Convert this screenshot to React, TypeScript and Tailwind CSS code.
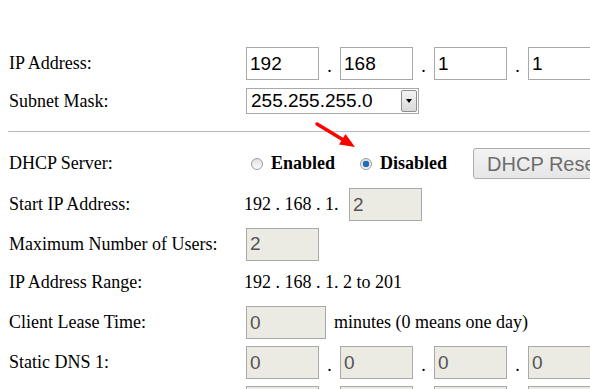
import React from 'react';

const serif = "font-['Liberation_Serif','Times_New_Roman',serif]";
const sans = "font-['Liberation_Sans',Arial,sans-serif]";

function Box({ value, gray = false, w = 'w-[73px]' }: { value: string; gray?: boolean; w?: string }) {
  return (
    <input
      readOnly
      value={value}
      className={`${w} h-[33px] shrink-0 border border-[#a9a9a9] px-[3px] text-[19px] outline-none ${sans} ${
        gray ? 'bg-[#ebebe4] text-[#545454]' : 'bg-white text-black'
      }`}
    />
  );
}

function Dot({ hidden }: { hidden?: boolean }) {
  return <span className="w-[21px] shrink-0 text-center text-[18px] pt-[6px]">{hidden ? '' : '.'}</span>;
}

function Quad({ values, gray = false, noDots = false }: { values: string[]; gray?: boolean; noDots?: boolean }) {
  return (
    <div className="flex items-center">
      {values.map((v, i) => (
        <React.Fragment key={i}>
          {i > 0 && <Dot hidden={noDots} />}
          <Box value={v} gray={gray} />
        </React.Fragment>
      ))}
    </div>
  );
}

function Row({ label, h, children }: { label?: string; h: string; children?: React.ReactNode }) {
  return (
    <div className={`flex items-center ${h}`}>
      <div className="w-[246px] shrink-0 pl-[9px] text-[18px] text-black">{label}</div>
      {children}
    </div>
  );
}

function Radio({ checked }: { checked?: boolean }) {
  return (
    <span className="w-[12px] h-[12px] rounded-full border border-[#9c9c9c] bg-gradient-to-b from-[#e2e2e2] to-[#fbfbfb] flex items-center justify-center shrink-0">
      {checked && <span className="w-[6px] h-[6px] rounded-full bg-[#1f6fb8] shadow-[0_0_1px_#0b3d6b]" />}
    </span>
  );
}

export default function App() {
  return (
    <div className={`relative w-[590px] h-[389px] overflow-hidden bg-white ${serif}`}>
      <div className="pt-[46px]">
        <Row label="IP Address:" h="h-[35px]">
          <Quad values={['192', '168', '1', '1']} />
        </Row>

        <Row label="Subnet Mask:" h="h-[40px]">
          <div className={`flex w-[173px] h-[26px] border border-[#a9a9a9] bg-white ${sans}`}>
            <span className="flex-1 pl-[4px] text-[19px] leading-[24px] text-black">255.255.255.0</span>
            <span className="w-[16px] m-[1px] border border-[#8f8f8f] rounded-[2px] bg-gradient-to-b from-[#f4f4f4] to-[#d9d9d9] flex items-center justify-center">
              <span className="w-0 h-0 border-l-[3px] border-r-[3px] border-t-[4px] border-l-transparent border-r-transparent border-t-black" />
            </span>
          </div>
        </Row>

        <div className="mt-[10px] ml-[8px] h-px bg-[#b8b8da]" />

        <div className="mt-[12px]">
          <Row label="DHCP Server:" h="h-[39px]">
            <div className="flex items-center ml-[5px] text-[18px] font-bold text-black">
              <Radio />
              <span className="ml-[8px]">Enabled</span>
              <span className="ml-[25px]"><Radio checked /></span>
              <span className="ml-[8px]">Disabled</span>
              <button
                className={`ml-[26px] h-[31px] shrink-0 whitespace-nowrap rounded-[3px] border border-[#acacac] bg-gradient-to-b from-[#f3f3f3] to-[#e6e6e6] pl-[13px] pr-[13px] text-[20px] font-normal text-[#6d6d6d] ${sans}`}
              >
                DHCP Reset
              </button>
            </div>
          </Row>
        </div>

        <Row label="Start IP Address:" h="h-[43px]">
          <span className="ml-[-2px] w-[105px] shrink-0 text-[18px]">192 . 168 . 1.</span>
          <Box value="2" gray />
        </Row>

        <Row label="Maximum Number of Users:" h="h-[36px]">
          <Box value="2" gray />
        </Row>

        <Row label="IP Address Range:" h="h-[40px]">
          <span className="ml-[-2px] text-[18px]">192 . 168 . 1. 2 to 201</span>
        </Row>

        <Row label="Client Lease Time:" h="h-[41px]">
          <Box value="0" gray w="w-[80px]" />
          <span className="ml-[8px] text-[18px] whitespace-nowrap">minutes (0 means one day)</span>
        </Row>

        <Row label="Static DNS 1:" h="h-[39px]">
          <Quad values={['0', '0', '0', '0']} gray />
        </Row>

        {/* next row, only its top edge is on screen */}
        <Row h="h-[41px]">
          <Quad values={['', '', '', '']} gray noDots />
        </Row>
      </div>

      {/* red annotation arrow */}
      <svg className="absolute left-[310px] top-[118px]" width="50" height="35" viewBox="0 0 50 35">
        <line x1="7" y1="6" x2="33" y2="21.8" stroke="#ff0000" strokeWidth="3.5" strokeLinecap="round" />
        <polygon points="45,29 29,26.5 35.5,16" fill="#ff0000" />
      </svg>
    </div>
  );
}
